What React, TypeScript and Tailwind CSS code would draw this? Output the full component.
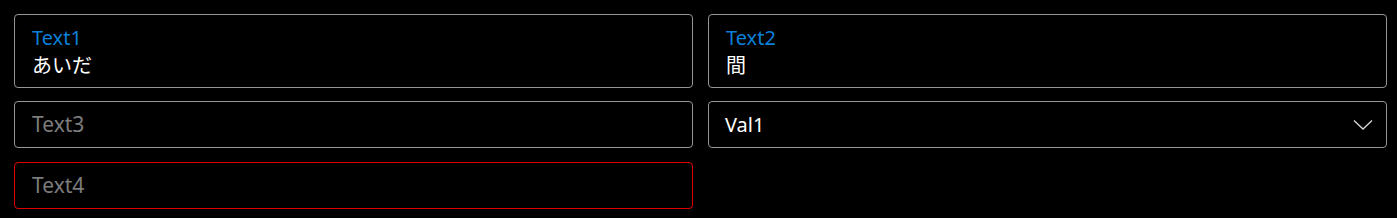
import React from "react";

const font = { fontFamily: '"Segoe UI", "Noto Sans", "Noto Sans CJK JP", sans-serif' };

function LabeledField({ label, value }: { label: string; value: string }) {
  return (
    <div className="h-[74px] rounded-[4px] border border-[#959595] bg-black px-[17px] pt-[10px] flex flex-col">
      <div className="text-[20px] leading-[26px] text-[#0a7fd8]">{label}</div>
      <div className="text-[20px] leading-[30px] text-white">{value}</div>
    </div>
  );
}

function PlaceholderField({ text, error }: { text: string; error?: boolean }) {
  return (
    <div
      className={
        error
          ? "h-[47px] rounded-[4px] border border-[#e00000] bg-black px-[17px] flex items-center"
          : "h-[47px] rounded-[4px] border border-[#959595] bg-black px-[17px] flex items-center"
      }
    >
      <span className="text-[21px] text-[#7c7c7c]">{text}</span>
    </div>
  );
}

function SelectField({ value }: { value: string }) {
  return (
    <div className="h-[47px] rounded-[4px] border border-[#959595] bg-black pl-[16px] pr-[13px] flex items-center justify-between">
      <span className="text-[20px] text-white">{value}</span>
      <svg width="20" height="12" viewBox="0 0 20 12" fill="none">
        <path d="M1 1.5 L10 10 L19 1.5" stroke="#d8d8d8" strokeWidth="1.3" />
      </svg>
    </div>
  );
}

export default function App() {
  return (
    <div className="w-[1397px] h-[218px] bg-black overflow-hidden" style={font}>
      <div className="grid grid-cols-2 gap-x-[15px] gap-y-[13px] pl-[14px] pr-[10px] pt-[14px]">
        <LabeledField label="Text1" value="あいだ" />
        <LabeledField label="Text2" value="間" />
        <PlaceholderField text="Text3" />
        <SelectField value="Val1" />
        <div className="pt-[1px]">
          <PlaceholderField text="Text4" error />
        </div>
        <div />
      </div>
    </div>
  );
}
